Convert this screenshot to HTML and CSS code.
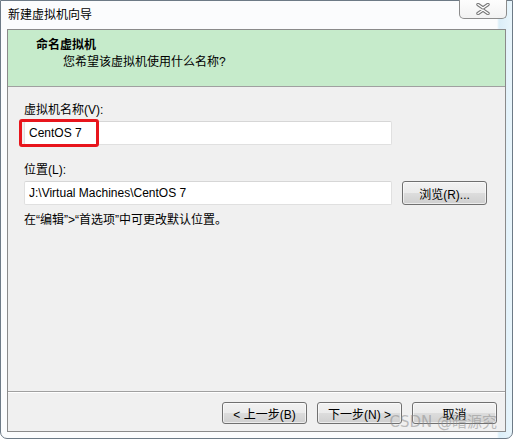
FILE: index.html
```html
<!DOCTYPE html>
<html lang="zh-CN">
<head>
    <meta charset="UTF-8">
    <title>新建虚拟机向导</title>
    <link rel="stylesheet" href="styles.css">
</head>
<body>
    <div class="window">
        <div class="titlebar">
            <span class="title">新建虚拟机向导</span>
            <button class="close" type="button" aria-label="关闭">
                <svg width="16" height="12" viewBox="0 0 16 12">
                    <path d="M3 1.5 L8 5 L13 1.5 M3 10.5 L8 7 L13 10.5" fill="none" stroke="#777" stroke-width="3.4" stroke-linecap="round"/>
                    <path d="M3 1.5 L8 5 L13 1.5 M3 10.5 L8 7 L13 10.5" fill="none" stroke="#fff" stroke-width="1.4" stroke-linecap="round"/>
                </svg>
            </button>
        </div>

        <div class="client">
            <div class="header">
                <div class="header-title">命名虚拟机</div>
                <div class="header-sub">您希望该虚拟机使用什么名称?</div>
            </div>

            <div class="content">
                <label class="field-label" for="vmName">虚拟机名称(V):</label>
                <div class="field-row mark-wrap">
                    <input class="text" id="vmName" type="text" value="CentOS 7">
                    <span class="mark"></span>
                </div>

                <label class="field-label second" for="vmPath">位置(L):</label>
                <div class="field-row">
                    <input class="text" id="vmPath" type="text" value="J:\Virtual Machines\CentOS 7">
                    <button class="btn browse" type="button">浏览(R)...</button>
                </div>
                <p class="hint">在“编辑”&gt;“首选项”中可更改默认位置。</p>
            </div>

            <div class="footer">
                <button class="btn" type="button">&lt; 上一步(B)</button>
                <button class="btn" type="button">下一步(N) &gt;</button>
                <button class="btn" type="button">取消</button>
            </div>
        </div>

        <span class="watermark">CSDN @暗源究</span>
    </div>
</body>
</html>
```

FILE: styles.css
```css
* {
    box-sizing: border-box;
}
body {
    margin: 0;
    background: #fff;
    font-family: "Liberation Sans", "Noto Sans CJK SC", sans-serif;
    font-size: 12px;
    color: #000;
}
.window {
    position: relative;
    width: 513px;
    height: 439px;
    border: 1px solid #6d7a86;
    border-radius: 0 0 7px 7px;
    background: linear-gradient(to right, #fbfcfd 0, #fbfcfd 496px, #dbeef8 498px, #eaf6fc 512px);
    display: flex;
    flex-direction: column;
}

/* title bar */
.titlebar {
    height: 28px;
    display: flex;
    justify-content: space-between;
    align-items: flex-start;
    padding: 0 5px 0 7px;
}
.title {
    margin-top: 6px;
    line-height: 16px;
}
.close {
    width: 48px;
    height: 19px;
    margin-top: -1px;
    padding: 0;
    border: 1px solid #8c8c8c;
    border-top: none;
    border-radius: 0 0 5px 5px;
    background: linear-gradient(#fdfdfd, #f2f2f2);
    display: flex;
    justify-content: center;
    align-items: center;
}

/* client area */
.client {
    flex: 1;
    margin: 0 6px 6px 6px;
    border: 1px solid #8a8a8a;
    background: #f0f0f0;
    display: flex;
    flex-direction: column;
}
.header {
    height: 57px;
    background: #c6ebcb;
    border-bottom: 1px solid #a0a0a0;
    padding: 7px 0 0 28px;
    line-height: 16px;
}
.header-title {
    font-weight: bold;
}
.header-sub {
    margin: 1px 0 0 27px;
}

.content {
    flex: 1;
    padding: 15px 0 0 16px;
}
.field-label {
    display: block;
    line-height: 16px;
    margin-bottom: 3px;
}
.field-label.second {
    margin-top: 17px;
}
.field-row {
    display: flex;
    align-items: center;
    gap: 10px;
}
.text {
    width: 368px;
    height: 24px;
    border: 1px solid #e0e0e0;
    border-top-color: #d6d6d6;
    border-radius: 2px;
    background: #fff;
    padding: 0 4px;
    font: inherit;
    color: #000;
}
.mark-wrap {
    position: relative;
}
.mark {
    position: absolute;
    left: -5px;
    top: -2px;
    width: 80px;
    height: 28px;
    border: 3px solid #e8151c;
    border-radius: 3px;
}
.hint {
    margin: 7px 0 0;
    line-height: 16px;
}

.btn {
    width: 85px;
    height: 22px;
    padding: 0;
    border: 1px solid #707070;
    border-radius: 3px;
    background: linear-gradient(#f2f2f2 0, #ebebeb 50%, #dddddd 50%, #cfcfcf 100%);
    font: inherit;
    color: #000;
    box-shadow: inset 0 0 0 1px rgba(255, 255, 255, 0.6);
}
.browse {
    height: 24px;
}

.footer {
    border-top: 1px solid #a0a0a0;
    box-shadow: inset 0 1px 0 #fff;
    display: flex;
    justify-content: flex-end;
    gap: 10px;
    padding: 10px 8px 7px 0;
}

.watermark {
    position: absolute;
    right: 15px;
    bottom: 7px;
    font-family: "DejaVu Sans", "Noto Sans CJK SC", sans-serif;
    font-size: 15px;
    color: rgba(140, 140, 140, 0.55);
    pointer-events: none;
}
```
